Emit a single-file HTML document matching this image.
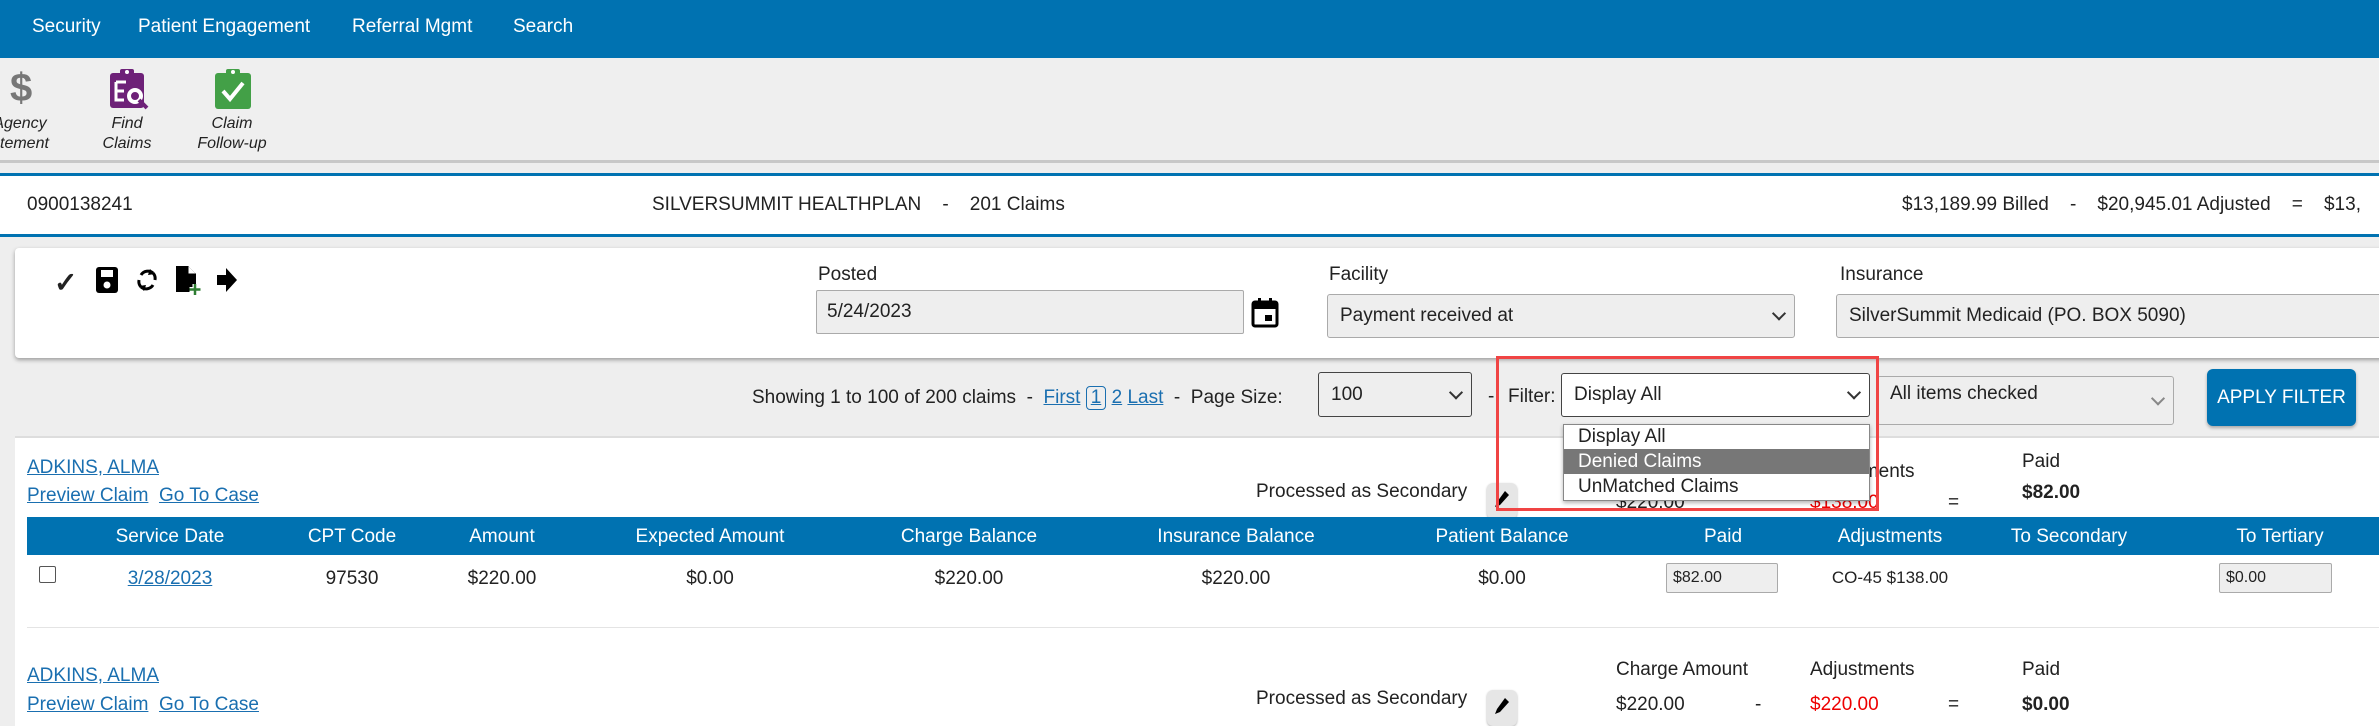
<!DOCTYPE html>
<html><head><meta charset="utf-8"><style>
*{box-sizing:border-box;margin:0;padding:0}
body{width:2379px;height:718px;overflow:hidden;background:#eeeeee;font-family:"Liberation Sans",sans-serif;font-size:19px;color:#222;position:relative}
.a{position:absolute;white-space:nowrap}
.nav{left:0;top:0;width:2379px;height:58px;background:#0072b1;box-shadow:0 2px 4px rgba(0,0,0,.3)}
.nav span{position:absolute;top:16px;color:#fff;font-size:19px}
.tb{left:0;top:58px;width:2379px;height:105px;background:#efefef;border-bottom:3px solid #c8c8c8}
.lbl{font-style:italic;font-size:16px;text-align:center;line-height:20px;color:#222}
.hdr{left:0;top:173px;width:2379px;height:64px;background:#fff;border-top:3px solid #0072b1;border-bottom:3px solid #0072b1}
.card{background:#fff;box-shadow:0 2px 4px rgba(0,0,0,.35);border-radius:4px}
.inp{border:1px solid #aaa;background:#eee;border-radius:2px;padding:0 10px;display:flex;align-items:center;font-size:19px}
.sel{border:1px solid #aaa;background:#eee;border-radius:3px;padding:0 12px;display:flex;align-items:center;font-size:19px}
.chev{position:absolute;right:10px;top:50%;width:10px;height:10px;border-right:2px solid #333;border-bottom:2px solid #333;transform:translateY(-75%) rotate(45deg)}
a,.lk{color:#1a6fb0;text-decoration:underline}
.th{left:27px;top:517px;width:2352px;height:38px;background:#0072b1}
.th span{position:absolute;top:9px;color:#fff;transform:translateX(-50%)}
.td{position:absolute;transform:translateX(-50%)}
.edit{width:30px;height:36px;background:#e6e6e6;border-radius:6px;box-shadow:0 1px 2px rgba(0,0,0,.3)}
</style></head><body>
<div class="a nav">
<span style="left:32px">Security</span><span style="left:138px">Patient Engagement</span><span style="left:352px">Referral Mgmt</span><span style="left:513px">Search</span>
</div>
<div class="a tb"></div>
<div class="a" style="left:10px;top:66px;font-size:40px;color:#777;font-weight:bold">$</div>
<svg class="a" style="left:109px;top:68px" width="42" height="44" viewBox="0 0 42 44"><rect x="1" y="5" width="34" height="35" rx="3" fill="#6e2178"/><rect x="11" y="1" width="14" height="8" rx="2" fill="#6e2178"/><circle cx="18" cy="4" r="2" fill="#fff"/><path d="M7 14h10M7 14v18h8M7 23h8" stroke="#fff" stroke-width="3" fill="none"/><circle cx="26" cy="28" r="6" stroke="#fff" stroke-width="4" fill="#6e2178"/><path d="M30 32l8 8" stroke="#6e2178" stroke-width="4"/></svg>
<svg class="a" style="left:214px;top:68px" width="38" height="42" viewBox="0 0 38 42"><rect x="1" y="5" width="36" height="36" rx="3" fill="#43a047"/><rect x="12" y="1" width="14" height="8" rx="2" fill="#43a047"/><circle cx="19" cy="4" r="2" fill="#fff"/><path d="M9 23l7 8 13-16" stroke="#fff" stroke-width="4" fill="none"/></svg>
<div class="a lbl" style="left:-20px;top:114px;width:80px">Agency<br>atement</div>
<div class="a lbl" style="left:87px;top:114px;width:80px">Find<br>Claims</div>
<div class="a lbl" style="left:187px;top:114px;width:90px">Claim<br>Follow-up</div>
<div class="a hdr"></div>
<div class="a" style="left:27px;top:194px">0900138241</div>
<div class="a" style="left:652px;top:194px">SILVERSUMMIT HEALTHPLAN &nbsp;&nbsp;&nbsp;- &nbsp;&nbsp;&nbsp;201 Claims</div>
<div class="a" style="left:1902px;top:194px">$13,189.99 Billed &nbsp;&nbsp;&nbsp;- &nbsp;&nbsp;&nbsp;$20,945.01 Adjusted &nbsp;&nbsp;&nbsp;= &nbsp;&nbsp;&nbsp;$13,</div>
<div class="a card" style="left:15px;top:248px;width:2380px;height:110px"></div>
<div class="a" style="left:54px;top:266px;font-size:28px;font-weight:bold">✓</div>
<svg class="a" style="left:96px;top:267px" width="22" height="26" viewBox="0 0 22 26"><rect x="0" y="0" width="22" height="26" rx="3" fill="#000"/><rect x="5" y="3" width="12" height="7" fill="#fff"/><circle cx="11" cy="18" r="3.5" fill="#fff"/></svg>
<svg class="a" style="left:136px;top:266px" width="22" height="28" viewBox="0 0 22 28"><path d="M5 9a8 8 0 0 1 12-2M17 19a8 8 0 0 1-12 2" stroke="#000" stroke-width="3" fill="none"/><path d="M3 14a8 8 0 0 0 2 7M19 14a8 8 0 0 0-2-7" stroke="#000" stroke-width="3" fill="none"/><path d="M14 3l5 5-7 1zM8 25l-5-5 7-1z" fill="#000"/></svg>
<svg class="a" style="left:176px;top:266px" width="26" height="30" viewBox="0 0 26 30"><path d="M0 0h12l8 8v18H0z" fill="#000"/><path d="M12 0v8h8" fill="#fff" stroke="#000"/><path d="M19 18v11M13.5 23.5h11" stroke="#fff" stroke-width="5"/><path d="M19 18v11M13.5 23.5h11" stroke="#2e7d32" stroke-width="2.5"/></svg>
<svg class="a" style="left:217px;top:268px" width="20" height="24" viewBox="0 0 20 24"><path d="M0 7h9V0l11 12-11 12v-7H0z" fill="#000"/></svg>
<div class="a" style="left:818px;top:264px">Posted</div>
<div class="a inp" style="left:816px;top:290px;width:428px;height:44px">5/24/2023</div>
<svg class="a" style="left:1251px;top:298px" width="28" height="30" viewBox="0 0 28 30"><rect x="2" y="4" width="24" height="24" rx="2" fill="none" stroke="#000" stroke-width="3"/><rect x="2" y="4" width="24" height="7" fill="#000"/><rect x="7" y="0" width="3" height="6" fill="#000"/><rect x="18" y="0" width="3" height="6" fill="#000"/><rect x="14" y="17" width="7" height="6" fill="#000"/></svg>
<div class="a" style="left:1329px;top:264px">Facility</div>
<div class="a sel" style="left:1327px;top:294px;width:468px;height:44px">Payment received at<i class="chev"></i></div>
<div class="a" style="left:1840px;top:264px">Insurance</div>
<div class="a sel" style="left:1836px;top:294px;width:560px;height:44px">SilverSummit Medicaid (PO. BOX 5090)</div>
<div class="a" style="left:752px;top:386px">Showing 1 to 100 of 200 claims &nbsp;- &nbsp;<span class="lk">First</span> <span style="display:inline-block;border:1px solid #1a6fb0;border-radius:4px;padding:0 4px;color:#1a6fb0;text-decoration:underline">1</span> <span class="lk">2</span> <span class="lk">Last</span> &nbsp;- &nbsp;Page Size:</div>
<div class="a sel" style="left:1318px;top:372px;width:154px;height:45px;border-color:#444">100<i class="chev"></i></div>
<div class="a" style="left:1488px;top:386px">-</div>
<div class="a" style="left:1508px;top:386px">Filter:</div>
<div class="a sel" style="left:1561px;top:373px;width:309px;height:44px;background:#fff;border-color:#444">Display All<i class="chev"></i></div>
<div class="a sel" style="left:1877px;top:376px;width:297px;height:49px;align-items:flex-start;padding-top:6px">All items checked<i class="chev" style="border-color:#888"></i></div>
<div class="a" style="left:2207px;top:369px;width:149px;height:57px;background:#0072b1;border-radius:6px;color:#fff;display:flex;align-items:center;justify-content:center;font-size:19px;box-shadow:0 2px 3px rgba(0,0,0,.3)">APPLY FILTER</div>
<div class="a" style="left:15px;top:436px;width:2380px;height:290px;background:#fff;border-top:2px solid #ddd"></div>
<div class="a lk" style="left:27px;top:457px">ADKINS, ALMA</div>
<div class="a" style="left:27px;top:485px"><span class="lk">Preview Claim</span>&nbsp;&nbsp;<span class="lk">Go To Case</span></div>
<div class="a" style="left:1256px;top:481px">Processed as Secondary</div>
<div class="a edit" style="left:1487px;top:483px"></div>
<svg class="a" style="left:1494px;top:490px" width="16" height="18" viewBox="0 0 16 18"><path d="M11 1l4 4-9 10-5 2 2-5z" fill="#000"/></svg>
<div class="a" style="left:1616px;top:492px">$220.00</div>
<div class="a" style="left:1810px;top:461px">Adjustments</div>
<div class="a" style="left:1810px;top:492px;color:#e00">$138.00</div>
<div class="a" style="left:1948px;top:492px">=</div>
<div class="a" style="left:2022px;top:451px">Paid</div>
<div class="a" style="left:2022px;top:482px;font-weight:bold">$82.00</div>
<div class="a th">
<span style="left:143px">Service Date</span><span style="left:325px">CPT Code</span><span style="left:475px">Amount</span><span style="left:683px">Expected Amount</span><span style="left:942px">Charge Balance</span><span style="left:1209px">Insurance Balance</span><span style="left:1475px">Patient Balance</span><span style="left:1696px">Paid</span><span style="left:1863px">Adjustments</span><span style="left:2042px">To Secondary</span><span style="left:2253px">To Tertiary</span>
</div>
<div class="a" style="left:39px;top:566px;width:17px;height:17px;border:1px solid #555;border-radius:2px;background:#fff"></div>
<div style="position:absolute;top:568px;left:0;width:2379px;height:30px">
<span class="td lk" style="left:170px">3/28/2023</span><span class="td" style="left:352px">97530</span><span class="td" style="left:502px">$220.00</span><span class="td" style="left:710px">$0.00</span><span class="td" style="left:969px">$220.00</span><span class="td" style="left:1236px">$220.00</span><span class="td" style="left:1502px">$0.00</span><span class="td" style="left:1890px;font-size:17px">CO-45 $138.00</span>
</div>
<div class="a inp" style="left:1666px;top:563px;width:112px;height:30px;font-size:16px;padding:0 6px">$82.00</div>
<div class="a inp" style="left:2219px;top:563px;width:113px;height:30px;font-size:16px;padding:0 6px">$0.00</div>
<div class="a" style="left:27px;top:627px;width:2352px;height:1px;background:#e4e4e4"></div>
<div class="a lk" style="left:27px;top:665px">ADKINS, ALMA</div>
<div class="a" style="left:27px;top:694px"><span class="lk">Preview Claim</span>&nbsp;&nbsp;<span class="lk">Go To Case</span></div>
<div class="a" style="left:1256px;top:688px">Processed as Secondary</div>
<div class="a edit" style="left:1487px;top:690px"></div>
<svg class="a" style="left:1494px;top:697px" width="16" height="18" viewBox="0 0 16 18"><path d="M11 1l4 4-9 10-5 2 2-5z" fill="#000"/></svg>
<div class="a" style="left:1616px;top:659px">Charge Amount</div>
<div class="a" style="left:1616px;top:694px">$220.00</div>
<div class="a" style="left:1755px;top:694px">-</div>
<div class="a" style="left:1810px;top:659px">Adjustments</div>
<div class="a" style="left:1810px;top:694px;color:#e00">$220.00</div>
<div class="a" style="left:1948px;top:694px">=</div>
<div class="a" style="left:2022px;top:659px">Paid</div>
<div class="a" style="left:2022px;top:694px;font-weight:bold">$0.00</div>
<div class="a" style="left:1563px;top:424px;width:307px;height:77px;background:#fff;border:1px solid #888;box-shadow:0 2px 4px rgba(0,0,0,.3)">
<div style="height:24px;padding-left:14px;line-height:24px">Display All</div>
<div style="height:25px;padding-left:14px;line-height:25px;background:#777;color:#fff">Denied Claims</div>
<div style="height:25px;padding-left:14px;line-height:25px">UnMatched Claims</div>
</div>
<div class="a" style="left:1496px;top:356px;width:383px;height:155px;border:3px solid #f04444"></div>
</body></html>
